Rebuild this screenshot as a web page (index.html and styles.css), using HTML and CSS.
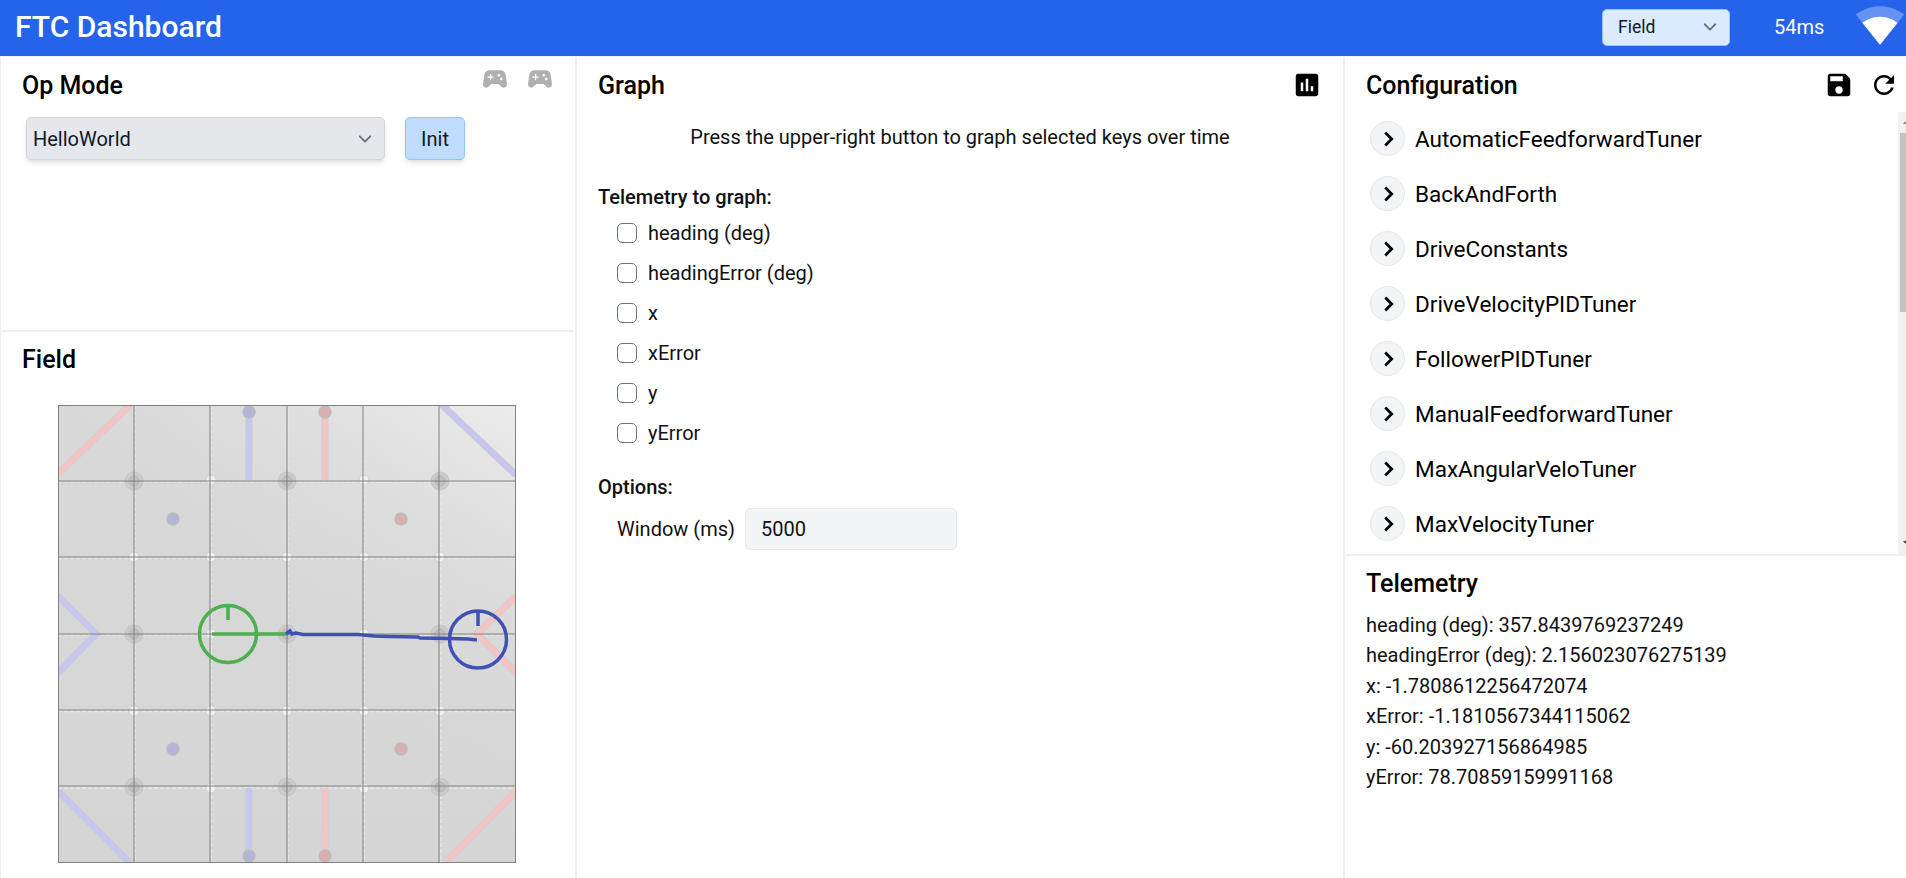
FILE: index.html
```html
<!DOCTYPE html>
<html lang="en">
<head>
<meta charset="utf-8">
<title>FTC Dashboard</title>
<link rel="stylesheet" href="styles.css">
</head>
<body>
<div class="app">
  <header class="nav">
    <h1 class="brand">FTC Dashboard</h1>
    <div class="nav-right">
      <select class="layout-select"><option>Field</option></select>
      <span class="ping">54ms</span>
      <svg class="wifi" viewBox="0 0 24 24"><path class="wifi-outer" d="M12.01 21.49L23.64 7c-.45-.34-4.93-4-11.64-4C5.28 3 .81 6.66.36 7l11.63 14.49.01.01.01-.01z"/><path class="wifi-inner" d="M3.53 10.95l8.46 10.54.01.01.01-.01 8.46-10.54C20.04 10.62 16.81 8 12 8c-4.81 0-8.04 2.62-8.47 2.95z"/></svg>
    </div>
  </header>
  <main class="main">
    <div class="col col-left">
      <section class="panel opmode">
        <div class="panel-head">
          <h2 class="title">Op Mode</h2>
          <div class="pads">
            <svg class="icon pad" viewBox="0 0 24 24"><path d="M21.58 16.09l-1.09-7.66C20.21 6.46 18.52 5 16.53 5H7.47C5.48 5 3.79 6.46 3.51 8.43l-1.09 7.66C2.2 17.63 3.39 19 4.94 19c.68 0 1.32-.27 1.8-.75L9 16h6l2.25 2.25c.48.48 1.13.75 1.8.75 1.56 0 2.75-1.37 2.53-2.91zM11 11H9v2H8v-2H6v-1h2V8h1v2h2v1zm4-1c-.55 0-1-.45-1-1s.45-1 1-1 1 .45 1 1-.45 1-1 1zm2 3c-.55 0-1-.45-1-1s.45-1 1-1 1 .45 1 1-.45 1-1 1z"/></svg>
            <svg class="icon pad" viewBox="0 0 24 24"><path d="M21.58 16.09l-1.09-7.66C20.21 6.46 18.52 5 16.53 5H7.47C5.48 5 3.79 6.46 3.51 8.43l-1.09 7.66C2.2 17.63 3.39 19 4.94 19c.68 0 1.32-.27 1.8-.75L9 16h6l2.25 2.25c.48.48 1.13.75 1.8.75 1.56 0 2.75-1.37 2.53-2.91zM11 11H9v2H8v-2H6v-1h2V8h1v2h2v1zm4-1c-.55 0-1-.45-1-1s.45-1 1-1 1 .45 1 1-.45 1-1 1zm2 3c-.55 0-1-.45-1-1s.45-1 1-1 1 .45 1 1-.45 1-1 1z"/></svg>
          </div>
        </div>
        <div class="op-controls">
          <select class="op-select"><option>HelloWorld</option></select>
          <button class="init">Init</button>
        </div>
      </section>
      <section class="panel field">
        <div class="panel-head field-head"><h2 class="title">Field</h2></div>
        <svg class="field-canvas" viewBox="0 0 458 458">
          <defs>
            <linearGradient id="mat" x1="1" y1="0" x2="0.55" y2="0.5">
              <stop offset="0" stop-color="#ececec"/>
              <stop offset="0.5" stop-color="#dfdfdf"/>
              <stop offset="1" stop-color="#d8d8d8"/>
            </linearGradient>
            <linearGradient id="matb" x1="0" y1="0" x2="0" y2="1">
              <stop offset="0" stop-color="#d7d7d7" stop-opacity="0"/>
              <stop offset="1" stop-color="#d5d5d5"/>
            </linearGradient>
          </defs>
          <rect width="458" height="458" fill="url(#mat)"/>
          <rect width="458" height="458" fill="url(#matb)"/>
          <path class="seams" d="M0 77H458M0 153.500H458M0 230H458M0 306.500H458M0 383H458M77 0V458M153.500 0V458M230 0V458M306.500 0V458M383 0V458"/>
          <path class="tape-edge" d="M0 69L72 0M267 0V75M267 383V458M458 191L419 229L458 268M387 458L458 386M384 0L458 70M191 0V75M191 383V458M0 191L38 229L0 268M0 386L72 458"/>
          <path class="tape-red" d="M0 69L72 0M267 0V75M267 383V458M458 191L419 229L458 268M387 458L458 386"/>
          <path class="tape-blue" d="M384 0L458 70M191 0V75M191 383V458M0 191L38 229L0 268M0 386L72 458"/>
          <g class="dot-white">
            <circle cx="153" cy="75" r="5"/><circle cx="306" cy="75" r="5"/>
            <circle cx="76" cy="152" r="5"/><circle cx="153" cy="152" r="5"/><circle cx="229" cy="152" r="5"/><circle cx="306" cy="152" r="5"/><circle cx="382" cy="152" r="5"/>
            <circle cx="153" cy="229" r="5"/><circle cx="306" cy="229" r="5"/>
            <circle cx="76" cy="306" r="5"/><circle cx="153" cy="306" r="5"/><circle cx="229" cy="306" r="5"/><circle cx="306" cy="306" r="5"/><circle cx="382" cy="306" r="5"/>
            <circle cx="153" cy="383" r="5"/><circle cx="306" cy="383" r="5"/>
          </g>
          <g class="dot-gray">
            <circle cx="76" cy="76" r="9"/><circle cx="229" cy="76" r="9"/><circle cx="382" cy="76" r="9"/>
            <circle cx="76" cy="229" r="9"/><circle cx="229" cy="229" r="9"/><circle cx="382" cy="229" r="9"/>
            <circle cx="76" cy="382" r="9"/><circle cx="229" cy="382" r="9"/><circle cx="382" cy="382" r="9"/>
          </g>
          <g class="ring-gray">
            <circle cx="76" cy="76" r="5"/><circle cx="229" cy="76" r="5"/><circle cx="382" cy="76" r="5"/>
            <circle cx="76" cy="229" r="5"/><circle cx="229" cy="229" r="5"/><circle cx="382" cy="229" r="5"/>
            <circle cx="76" cy="382" r="5"/><circle cx="229" cy="382" r="5"/><circle cx="382" cy="382" r="5"/>
          </g>
          <g class="dot-blue">
            <circle cx="191" cy="7" r="6"/><circle cx="115" cy="114" r="6"/><circle cx="115" cy="344" r="6"/><circle cx="191" cy="451" r="6"/>
          </g>
          <g class="dot-red">
            <circle cx="267" cy="7" r="6"/><circle cx="343" cy="114" r="6"/><circle cx="343" cy="344" r="6"/><circle cx="267" cy="451" r="6"/>
          </g>
          <path class="grid-lines" d="M0 76H458M0 152H458M0 229H458M0 305H458M0 381H458M76 0V458M152 0V458M229 0V458M305 0V458M381 0V458"/>
          <rect class="frame" x="0.5" y="0.5" width="457" height="457"/>
          <g class="bot-green">
            <circle cx="170" cy="229" r="28.500"/>
            <path d="M170 200V215M154 229H228"/>
          </g>
          <path class="trail" d="M228 229L232 226L234 229L238 228L245 229.500L300 229.500L316 231L330 231.500L360 232L362 233L390 233.500L410 234L419 235"/>
          <g class="bot-blue">
            <circle cx="420" cy="234.500" r="28.500"/>
            <path d="M420 206V221"/>
          </g>
        </svg>
      </section>
    </div>
    <div class="col col-mid">
      <section class="panel graph">
        <div class="panel-head">
          <h2 class="title">Graph</h2>
          <svg class="icon dark chart" viewBox="0 0 24 24"><path d="M19 3H5c-1.100 0-2 .9-2 2v14c0 1.100.9 2 2 2h14c1.100 0 2-.9 2-2V5c0-1.100-.9-2-2-2zM9 17H7v-7h2v7zm4 0h-2V7h2v10zm4 0h-2v-4h2v4z"/></svg>
        </div>
        <p class="hint">Press the upper-right button to graph selected keys over time</p>
        <h3 class="sub">Telemetry to graph:</h3>
        <ul class="keys">
          <li><label class="key"><input type="checkbox"><span>heading (deg)</span></label></li>
          <li><label class="key"><input type="checkbox"><span>headingError (deg)</span></label></li>
          <li><label class="key"><input type="checkbox"><span>x</span></label></li>
          <li><label class="key"><input type="checkbox"><span>xError</span></label></li>
          <li><label class="key"><input type="checkbox"><span>y</span></label></li>
          <li><label class="key"><input type="checkbox"><span>yError</span></label></li>
        </ul>
        <h3 class="sub options">Options:</h3>
        <div class="window">
          <label class="window-label" for="win">Window (ms)</label>
          <input class="window-input" id="win" value="5000">
        </div>
      </section>
    </div>
    <div class="col col-right">
      <section class="panel config">
        <div class="panel-head config-head">
          <h2 class="title">Configuration</h2>
          <div class="config-actions">
            <svg class="icon dark" viewBox="0 0 24 24"><path d="M17 3H5c-1.110 0-2 .9-2 2v14c0 1.100.89 2 2 2h14c1.100 0 2-.9 2-2V7l-4-4zm-5 16c-1.660 0-3-1.340-3-3s1.340-3 3-3 3 1.340 3 3-1.340 3-3 3zm3-10H5V5h10v4z"/></svg>
            <svg class="icon dark" viewBox="0 0 24 24"><path d="M17.650 6.350C16.200 4.900 14.210 4 12 4c-4.420 0-7.990 3.580-7.990 8s3.570 8 7.990 8c3.730 0 6.840-2.550 7.730-6h-2.080c-.82 2.330-3.040 4-5.650 4-3.310 0-6-2.690-6-6s2.690-6 6-6c1.660 0 3.140.69 4.220 1.780L13 11h7V4l-2.350 2.350z"/></svg>
          </div>
        </div>
        <div class="config-body">
          <ul class="config-list">
            <li class="cfg"><span class="cfg-btn"><svg viewBox="0 0 24 24"><path d="M9 5l7 7-7 7"/></svg></span><span>AutomaticFeedforwardTuner</span></li>
            <li class="cfg"><span class="cfg-btn"><svg viewBox="0 0 24 24"><path d="M9 5l7 7-7 7"/></svg></span><span>BackAndForth</span></li>
            <li class="cfg"><span class="cfg-btn"><svg viewBox="0 0 24 24"><path d="M9 5l7 7-7 7"/></svg></span><span>DriveConstants</span></li>
            <li class="cfg"><span class="cfg-btn"><svg viewBox="0 0 24 24"><path d="M9 5l7 7-7 7"/></svg></span><span>DriveVelocityPIDTuner</span></li>
            <li class="cfg"><span class="cfg-btn"><svg viewBox="0 0 24 24"><path d="M9 5l7 7-7 7"/></svg></span><span>FollowerPIDTuner</span></li>
            <li class="cfg"><span class="cfg-btn"><svg viewBox="0 0 24 24"><path d="M9 5l7 7-7 7"/></svg></span><span>ManualFeedforwardTuner</span></li>
            <li class="cfg"><span class="cfg-btn"><svg viewBox="0 0 24 24"><path d="M9 5l7 7-7 7"/></svg></span><span>MaxAngularVeloTuner</span></li>
            <li class="cfg"><span class="cfg-btn"><svg viewBox="0 0 24 24"><path d="M9 5l7 7-7 7"/></svg></span><span>MaxVelocityTuner</span></li>
          </ul>
          <div class="scrollbar">
            <span class="arrow arrow-up"></span>
            <span class="thumb"></span>
            <span class="arrow arrow-down"></span>
          </div>
        </div>
      </section>
      <section class="panel telemetry">
        <div class="panel-head telemetry-head"><h2 class="title">Telemetry</h2></div>
        <ul class="telemetry-lines">
          <li>heading (deg): 357.8439769237249</li>
          <li>headingError (deg): 2.156023076275139</li>
          <li>x: -1.7808612256472074</li>
          <li>xError: -1.1810567344115062</li>
          <li>y: -60.203927156864985</li>
          <li>yError: 78.70859159991168</li>
        </ul>
      </section>
    </div>
  </main>
</div>
</body>
</html>
```

FILE: styles.css
```css
* { box-sizing: border-box; }
html, body { margin: 0; height: 100%; overflow: hidden; }
body { font-family: Roboto, "Liberation Sans", sans-serif; font-size: 20px; color: #111; background: #fff; }
h1, h2, h3, p, ul { margin: 0; padding: 0; }
ul { list-style: none; }

.app { display: flex; flex-direction: column; height: 100vh; }

.nav { flex: none; height: 56px; background: #2563eb; color: #fff; display: flex; align-items: center; justify-content: space-between; padding: 0 1px 2px 15px; }
.brand { font-size: 30px; font-weight: 500; line-height: 1; }
.nav-right { display: flex; align-items: center; height: 100%; }
.layout-select { appearance: none; width: 128px; height: 37px; padding: 0 0 0 15px; border: 1px solid #93c5fd; border-radius: 5px; background-color: #dbeafe; color: #111827; font: 400 17.5px Roboto, sans-serif; background-image: url("data:image/svg+xml,%3Csvg xmlns='http://www.w3.org/2000/svg' viewBox='0 0 20 20'%3E%3Cpath d='M6 8l4 4 4-4' fill='none' stroke='%236b7280' stroke-width='1.5' stroke-linecap='round' stroke-linejoin='round'/%3E%3C/svg%3E"); background-repeat: no-repeat; background-position: right 6px center; background-size: 26px; }
.ping { margin-left: 44px; font-size: 20px; width: 51px; }
.wifi { width: 50px; height: 50px; margin-left: 30px; align-self: flex-start; margin-top: 0; }
.wifi-outer { fill: #fff; fill-opacity: 0.3; }
.wifi-inner { fill: #fff; }

.main { flex: 1; min-height: 0; display: grid; grid-template-columns: 577px 768px 1fr; border-top: 1px solid #f3f4f6; }
.col { display: flex; flex-direction: column; min-width: 0; min-height: 0; }
.col-left { border-left: 1px solid #eee; border-right: 2px solid #eee; }
.col-mid { border-right: 2px solid #eee; }

.panel-head { display: flex; align-items: center; justify-content: space-between; height: 55px; }
.title { font-size: 25px; font-weight: 500; color: #000; line-height: 1; padding-top: 1px; }

.opmode { height: 275px; flex: none; border-bottom: 2px solid #eee; }
.opmode .panel-head { padding: 0 20px 0 21px; align-items: flex-start; }
.opmode .title { margin-top: 15px; }
.pads { display: flex; gap: 15px; margin-top: 7px; }
.icon { display: block; width: 30px; height: 30px; }
.dark { fill: #000; }
.pad { fill: #b0b0b0; }
.op-controls { display: flex; align-items: flex-start; padding: 5px 0 0 25px; gap: 20px; }
.op-select { appearance: none; width: 359px; height: 43px; padding: 0 0 0 6px; border: 1px solid #d1d5db; border-radius: 5px; background-color: #e5e7eb; color: #111827; font: 400 20px Roboto, sans-serif; box-shadow: 0 4px 6px -1px rgba(0,0,0,.1), 0 2px 4px -2px rgba(0,0,0,.1); background-image: url("data:image/svg+xml,%3Csvg xmlns='http://www.w3.org/2000/svg' viewBox='0 0 20 20'%3E%3Cpath d='M6 8l4 4 4-4' fill='none' stroke='%236b7280' stroke-width='1.5' stroke-linecap='round' stroke-linejoin='round'/%3E%3C/svg%3E"); background-repeat: no-repeat; background-position: right 6px center; background-size: 26px; }
.init { width: 60px; height: 43px; border: 1px solid #93c5fd; border-radius: 5px; background: #bfdbfe; color: #111827; font: 400 20px Roboto, sans-serif; padding: 0; box-shadow: 0 4px 6px -1px rgba(0,0,0,.1), 0 2px 4px -2px rgba(0,0,0,.1); }

.field { flex: 1; }
.field-head { padding: 0 21px; height: 53px; }
.field-canvas { display: block; width: 458px; height: 458px; margin: 20px 0 0 57px; }
.seams { fill: none; stroke: #e6e6e6; stroke-width: 1.500; stroke-dasharray: 4 2; }
.tape-edge { fill: none; stroke: #cccccc; stroke-width: 7; }
.tape-red { fill: none; stroke: #f3c4c4; stroke-width: 6; }
.tape-blue { fill: none; stroke: #c6c6ee; stroke-width: 6; }
.dot-white circle { fill: #f0f0f0; stroke: #d0d0d0; stroke-width: 1; }
.dot-gray circle { fill: #cbcbcb; stroke: #c4c4c4; stroke-width: 1; }
.ring-gray circle { fill: #c0c0c0; stroke: #b6b6b6; stroke-width: 1; }
.dot-blue circle { fill: #b4b4d8; stroke: #bcbcbc; stroke-width: 1.500; }
.dot-red circle { fill: #d8b0b0; stroke: #bcbcbc; stroke-width: 1.500; }
.grid-lines { fill: none; stroke: #808080; stroke-width: 1; }
.frame { fill: none; stroke: #808080; stroke-width: 1; }
.bot-green circle, .bot-green path { fill: none; stroke: #4caf50; stroke-width: 3.500; }
.bot-blue circle, .bot-blue path { fill: none; stroke: #3f51b5; stroke-width: 3.500; }
.trail { fill: none; stroke: #3f51b5; stroke-width: 3.500; }

.graph { padding: 0 21px; }
.hint { text-align: center; font-size: 20px; line-height: 24px; margin-top: 13px; }
.sub { font-size: 20px; font-weight: 500; line-height: 24px; margin-top: 36px; }
.keys { margin-top: 4px; }
.key { display: flex; align-items: center; height: 40px; padding-left: 19px; gap: 11px; font-size: 20px; }
.key input { appearance: none; width: 20px; height: 20px; margin: 0; border: 1px solid #6b7280; border-radius: 5px; background: #fff; flex: none; }
.options { margin-top: 22px; }
.window { display: flex; align-items: center; padding-left: 19px; gap: 10px; margin-top: 9px; font-size: 20px; }
.window-input { width: 212px; height: 42px; padding: 0 15px; border: 1px solid #e5e7eb; border-radius: 5px; background: #f3f4f6; color: #111; font: 400 20px Roboto, sans-serif; }

.config { height: 499px; flex: none; border-bottom: 2px solid #eee; }
.config-head { padding: 0 7px 0 21px; }
.config-actions { display: flex; gap: 15px; }
.config-body { display: flex; height: 442px; }
.config-list { flex: 1; padding-left: 25px; margin-top: -1px; }
.cfg { display: flex; align-items: center; gap: 10px; height: 55px; font-size: 22.5px; color: #000; }
.cfg-btn { flex: none; width: 35px; height: 35px; border-radius: 50%; background: #f3f4f6; border: 1px solid #e5e7eb; display: flex; align-items: center; justify-content: center; }
.cfg-btn svg { width: 22px; height: 22px; fill: none; stroke: #000; stroke-width: 3; }
.scrollbar { flex: none; width: 8px; background: #f1f1f1; display: flex; flex-direction: column; align-items: flex-end; }
.thumb { display: block; width: 6px; height: 179px; background: #c1c1c1; margin-top: 9px; }
.arrow { display: block; width: 0; height: 0; border-left: 3px solid transparent; border-bottom: 3px solid #777; }
.arrow-up { margin-top: 9px; }
.arrow-down { margin-top: auto; margin-bottom: 10px; border-bottom: 0; border-top: 3px solid #333; }

.telemetry { flex: 1; padding: 0 21px; }
.telemetry-head { height: 54px; }
.telemetry-lines { font-size: 20px; line-height: 30.400px; color: #111; }
```
